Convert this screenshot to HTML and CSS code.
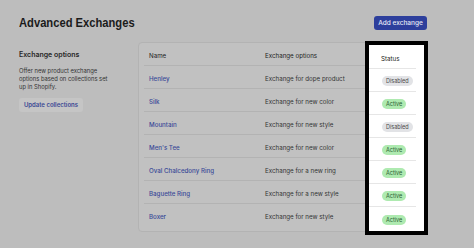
FILE: index.html
```html
<!DOCTYPE html>
<html>
<head>
<meta charset="utf-8">
<link rel="stylesheet" href="styles.css">
</head>
<body>
<div class="page">
  <div class="topbar">
    <h1 class="title">Advanced Exchanges</h1>
    <button class="btn-primary">Add exchange</button>
  </div>
  <div class="layout">
    <aside class="side">
      <h2 class="side-title">Exchange options</h2>
      <p class="side-text">Offer new product exchange options based on collections set up in Shopify.</p>
      <button class="btn-plain">Update collections</button>
    </aside>
    <section class="card">
      <div class="tbl">
        <div class="row head"><span class="c-name">Name</span><span class="c-opt">Exchange options</span></div>
        <div class="row"><a class="c-name link">Henley</a><span class="c-opt">Exchange for dope product</span></div>
        <div class="row"><a class="c-name link">Silk</a><span class="c-opt">Exchange for new color</span></div>
        <div class="row"><a class="c-name link">Mountain</a><span class="c-opt">Exchange for new style</span></div>
        <div class="row"><a class="c-name link">Men's Tee</a><span class="c-opt">Exchange for new color</span></div>
        <div class="row"><a class="c-name link">Oval Chalcedony Ring</a><span class="c-opt">Exchange for a new ring</span></div>
        <div class="row"><a class="c-name link">Baguette Ring</a><span class="c-opt">Exchange for a new style</span></div>
        <div class="row last"><a class="c-name link">Boxer</a><span class="c-opt">Exchange for new style</span></div>
      </div>
      <div class="status-col">
        <div class="srow head">Status</div>
        <div class="srow"><span class="badge off">Disabled</span></div>
        <div class="srow"><span class="badge on">Active</span></div>
        <div class="srow"><span class="badge off">Disabled</span></div>
        <div class="srow"><span class="badge on">Active</span></div>
        <div class="srow"><span class="badge on">Active</span></div>
        <div class="srow"><span class="badge on">Active</span></div>
        <div class="srow last"><span class="badge on">Active</span></div>
      </div>
    </section>
  </div>
</div>
</body>
</html>
```
FILE: styles.css
```css
* { box-sizing: border-box; }
html, body { margin: 0; }
body {
  background: #bdbdbd;
  font-family: Inter, "Liberation Sans", sans-serif;
  color: #1f1f1f;
  width: 474px;
  height: 248px;
  overflow: hidden;
}
.page {
  padding: 12px 47px 0 19px;
}
.topbar {
  display: flex;
  justify-content: space-between;
  align-items: center;
  height: 20px;
  margin-top: 1px;
}
.title {
  margin: 0 0 2px;
  font-family: "Liberation Sans", Arial, sans-serif;
  font-size: 11.2px;
  font-weight: 700;
  color: #1b1b1b;
  transform: scaleY(1.2);
  transform-origin: left center;
}
.btn-primary {
  background: #2d3f9c;
  color: #e8ebf6;
  border: none;
  border-radius: 3px;
  font-family: inherit;
  font-size: 6.5px;
  font-weight: 500;
  height: 14px;
  width: 53px;
  padding: 0;
}
.layout {
  display: flex;
  margin-top: 9px;
}
.side {
  width: 119px;
  flex: none;
  padding-top: 8px;
}
.side-title {
  margin: 0;
  font-size: 7px;
  font-weight: 600;
  color: #262626;
}
.side-text {
  margin: 8px 0 0;
  font-size: 5.8px;
  line-height: 8px;
  color: #333;
  width: 96px;
}
.btn-plain {
  margin-top: 6px;
  background: #c5c5c5;
  border: none;
  border-radius: 3px;
  color: #3c4894;
  font-family: inherit;
  font-size: 6px;
  font-weight: 600;
  height: 14px;
  width: 64px;
  padding: 0;
}
.card {
  flex: 1;
  display: flex;
  background: #c1c1c1;
  border: 1px solid #b3b3b3;
  border-radius: 4px;
  height: 190px;
}
.tbl {
  flex: 1;
  padding-left: 5px;
}
.row {
  display: flex;
  align-items: center;
  height: 23px;
  padding-top: 2px;
  border-bottom: 1px solid #b3b3b3;
  font-size: 6.2px;
  color: #333;
}
.row.head { height: 23px; color: #222; }
.row.last { border-bottom: none; }
.c-name { width: 121px; padding-left: 5px; }
.c-opt { flex: 1; }
.link { color: #3a4a98; font-weight: 500; }
.status-col {
  width: 63px;
  flex: none;
  margin: -2px -2px -4px 0;
  background: #fff;
  border: 4px solid #000;
  padding: 1px 8px 0 0;
}
.srow {
  height: 23px;
  display: flex;
  align-items: center;
  padding-left: 12px;
  padding-top: 2px;
  border-bottom: 1px solid #e6e6e6;
  font-size: 6.2px;
  color: #222;
}
.srow.last { border-bottom: none; }
.badge {
  display: inline-block;
  height: 10px;
  line-height: 10px;
  border-radius: 5px;
  padding: 0 4px;
  margin-left: 1px;
  font-size: 5.5px;
}
.badge.off { background: #e2e3e6; color: #4a4a4a; }
.badge.on { background: #aeeab0; color: #2c5f33; }
```
